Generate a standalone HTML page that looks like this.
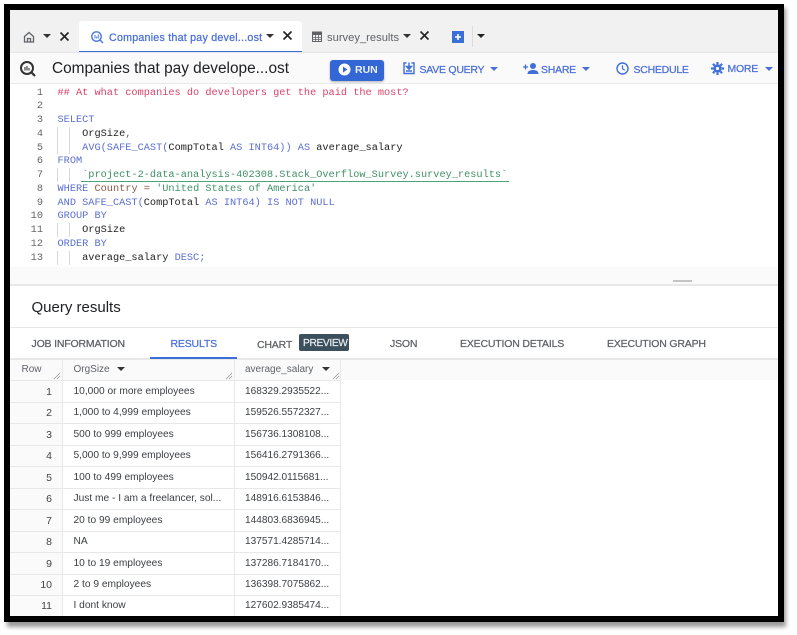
<!DOCTYPE html>
<html><head><meta charset="utf-8">
<style>
html,body{margin:0;padding:0;background:#fff}
body{width:797px;height:635px;position:relative;overflow:hidden;font-family:"Liberation Sans",sans-serif;filter:blur(.3px)}
.a{position:absolute}
.t{position:absolute;white-space:nowrap;line-height:14px;margin-top:1px}
.r{position:absolute;background:#e8e8e8}
.tri{position:absolute;width:0;height:0;border-left:4px solid transparent;border-right:4px solid transparent}
.code{position:absolute;left:57.5px;font:10.28px/14px "Liberation Mono",monospace;white-space:pre;color:#222;margin-top:1px}
.ln{position:absolute;width:36px;left:7px;text-align:right;font:10.28px/14px "Liberation Mono",monospace;color:#666;margin-top:1px}
.k{color:#5a6fd0}.c{color:#d9436a}.s{color:#3f9168}.f{color:#5a6fd0}.b{color:#8a5a44}
.guide{position:absolute;width:1px;background:#d8d8d8;margin-top:1px}
.rn{position:absolute;left:10px;width:42px;text-align:right;font-size:10.5px;line-height:14px;color:#444;margin-top:1px}
.o{position:absolute;left:73.5px;font-size:10.2px;line-height:14px;color:#3c4043;white-space:nowrap;margin-top:1px}
.v{position:absolute;left:245px;font-size:10.1px;line-height:14px;color:#3c4043;white-space:nowrap;margin-top:1px}
.tab{font-size:10.5px;color:#5f6368;-webkit-text-stroke:.25px #5f6368;letter-spacing:-.18px}
.btn{font-size:10.5px;color:#4a6fd8;-webkit-text-stroke:.25px #4a6fd8;letter-spacing:-.25px}
</style></head><body>
<!-- shadow + frame -->
<div class="a" style="left:7px;top:8px;width:779px;height:619px;background:#9a9a9a;filter:blur(2px)"></div>
<div class="a" style="left:4px;top:4px;width:780px;height:618px;background:#000"></div>
<div class="a" style="left:10px;top:10px;width:768px;height:606px;background:#fff;overflow:hidden"></div>

<!-- tab bar -->
<div class="a" style="left:10px;top:10px;width:768px;height:42px;background:#f1f1f1"></div>
<div class="a" style="left:79px;top:21px;width:223px;height:31px;background:#fff;border-radius:3px 3px 0 0"></div>
<div class="a" style="left:79px;top:51px;width:223px;height:1.5px;background:#3b6fd8"></div>
<div class="a" style="left:10px;top:52px;width:768px;height:1px;background:#e6e6e6"></div>

<!-- home icon -->
<svg class="a" style="left:23px;top:31px" width="12" height="12" viewBox="0 0 12 12"><path d="M1.500 5.500 6 1.500l4.500 4v5.500H1.500z M4.500 11V7.500h3V11" fill="none" stroke="#5f6368" stroke-width="1.300"/></svg>
<div class="tri" style="left:43px;top:34px;border-top:4px solid #333"></div>
<svg class="a" style="left:59px;top:31px" width="11" height="11" viewBox="0 0 11 11"><path d="M1.500 1.500l8 8M9.500 1.500l-8 8" stroke="#222" stroke-width="1.600"/></svg>

<!-- tab 1 -->
<svg class="a" style="left:90px;top:30px" width="14" height="14" viewBox="0 0 14 14"><circle cx="6.500" cy="6.500" r="4.700" fill="none" stroke="#4a78dc" stroke-width="1.400"/><path d="M10 10l3 3" stroke="#4a78dc" stroke-width="1.500"/><path d="M5 5v3.500M6.700 6.500v2M8.300 4.500v4" stroke="#4a78dc" stroke-width="1"/></svg>
<div class="t" style="left:109px;top:30px;font-size:10.7px;color:#4a6fd8;-webkit-text-stroke:.25px #4a6fd8;letter-spacing:.22px">Companies that pay devel...ost</div>
<div class="tri" style="left:266px;top:34px;border-top:4px solid #333"></div>
<svg class="a" style="left:282px;top:30px" width="11" height="11" viewBox="0 0 11 11"><path d="M1.500 1.500l8 8M9.500 1.500l-8 8" stroke="#222" stroke-width="1.600"/></svg>

<!-- tab 2 -->
<svg class="a" style="left:312px;top:31px" width="10" height="11" viewBox="0 0 10 11"><path d="M.5 1h9v9.500h-9z" fill="none" stroke="#5f6368" stroke-width="1"/><path d="M.5 1h9v3h-9z" fill="#5f6368"/><path d="M.5 6.500h9M.5 8.500h9M3.500 4v6.500M6.500 4v6.500" stroke="#5f6368" stroke-width=".8"/></svg>
<div class="t" style="left:327px;top:30px;font-size:11.2px;color:#5f6368">survey_results</div>
<div class="tri" style="left:403px;top:34px;border-top:4px solid #333"></div>
<svg class="a" style="left:419px;top:30px" width="11" height="11" viewBox="0 0 11 11"><path d="M1.500 1.500l8 8M9.500 1.500l-8 8" stroke="#222" stroke-width="1.600"/></svg>

<!-- plus -->
<div class="a" style="left:452px;top:31px;width:12px;height:12px;background:#3b6fd8"></div>
<svg class="a" style="left:452px;top:31px" width="12" height="12" viewBox="0 0 12 12"><path d="M6 3v6M3 6h6" stroke="#fff" stroke-width="1.600"/></svg>
<div class="a" style="left:472px;top:26px;width:1px;height:21px;background:#dcdcdc"></div>
<div class="tri" style="left:477px;top:34px;border-top:4px solid #222"></div>

<!-- toolbar -->
<div class="a" style="left:10px;top:53px;width:768px;height:30px;background:#fafafa"></div>
<div class="a" style="left:10px;top:83px;width:768px;height:1px;background:#e8e8e8"></div>
<svg class="a" style="left:19px;top:60px" width="18" height="18" viewBox="0 0 18 18"><circle cx="8" cy="8" r="6" fill="none" stroke="#333" stroke-width="2"/><path d="M12.500 12.500l3.500 3.500" stroke="#333" stroke-width="2.200"/><path d="M6 7v3.500M8 6v4.500M10 8v2.500" stroke="#333" stroke-width="1.100"/></svg>
<div class="t" style="left:52px;top:59px;font-size:15.4px;line-height:18px;color:#202124">Companies that pay develope...ost</div>

<div class="a" style="left:330px;top:59.500px;width:54px;height:21px;background:#3367d6;border-radius:3px;box-shadow:0 1px 2px rgba(0,0,0,.3)"></div>
<svg class="a" style="left:338px;top:63px" width="13" height="13" viewBox="0 0 13 13"><circle cx="6.500" cy="6.500" r="6" fill="#fff"/><path d="M5 3.500v6l4.500-3z" fill="#3367d6"/></svg>
<div class="t" style="left:355px;top:62px;font-size:10.5px;font-weight:bold;color:#e8eefc">RUN</div>

<svg class="a" style="left:403px;top:62px" width="12" height="13" viewBox="0 0 12 13"><path d="M3.500 1H1v10.500h10V1H8.500" fill="none" stroke="#3f6fd8" stroke-width="1.400"/><path d="M6 .5v6M3.500 4.500 6 7.200l2.500-2.700zM3 9h6" stroke="#3f6fd8" stroke-width="1.400" fill="#3f6fd8"/></svg>
<div class="t btn" style="left:419.500px;top:62px">SAVE QUERY</div>
<div class="tri" style="left:490px;top:66.500px;border-top:4px solid #4a6fd8"></div>

<svg class="a" style="left:523px;top:62px" width="16" height="13" viewBox="0 0 16 13"><circle cx="10" cy="4" r="3" fill="#3f6fd8"/><path d="M4.500 12c0-3 2.500-4 5.500-4s5.500 1 5.500 4z" fill="#3f6fd8"/><path d="M0 5h5M2.500 2.500v5" stroke="#3f6fd8" stroke-width="1.300"/></svg>
<div class="t btn" style="left:541px;top:62px">SHARE</div>
<div class="tri" style="left:582px;top:66.500px;border-top:4px solid #4a6fd8"></div>

<svg class="a" style="left:616px;top:62px" width="13" height="13" viewBox="0 0 13 13"><circle cx="6.500" cy="6.500" r="5.500" fill="none" stroke="#3f6fd8" stroke-width="1.400"/><path d="M6.500 3.200v3.500l2.300 1.500" fill="none" stroke="#3f6fd8" stroke-width="1.200"/></svg>
<div class="t btn" style="left:633.500px;top:62px">SCHEDULE</div>

<svg class="a" style="left:711px;top:62px" width="13" height="13" viewBox="0 0 13 13"><circle cx="6.500" cy="6.500" r="2.900" fill="none" stroke="#3f6fd8" stroke-width="2.600"/><path d="M6.500 0v13M0 6.500h13M1.900 1.900l9.200 9.200M11.100 1.900l-9.200 9.200" stroke="#3f6fd8" stroke-width="2.200" stroke-dasharray="2.300 8.400"/></svg>
<div class="t btn" style="left:727.500px;top:61px">MORE</div>
<div class="tri" style="left:765px;top:66.500px;border-top:4px solid #4a6fd8"></div>

<!-- editor -->
<div class="ln" style="top:85px">1</div>
<div class="ln" style="top:98px">2</div>
<div class="ln" style="top:112px">3</div>
<div class="ln" style="top:126px">4</div>
<div class="ln" style="top:140px">5</div>
<div class="ln" style="top:153px">6</div>
<div class="ln" style="top:167px">7</div>
<div class="ln" style="top:181px">8</div>
<div class="ln" style="top:195px">9</div>
<div class="ln" style="top:208px">10</div>
<div class="ln" style="top:222px">11</div>
<div class="ln" style="top:236px">12</div>
<div class="ln" style="top:250px">13</div>
<div class="guide" style="left:57px;top:126px;height:27px"></div>
<div class="guide" style="left:69px;top:126px;height:27px"></div>
<div class="guide" style="left:57px;top:167px;height:14px"></div>
<div class="guide" style="left:69px;top:167px;height:14px"></div>
<div class="guide" style="left:57px;top:222px;height:14px"></div>
<div class="guide" style="left:69px;top:222px;height:14px"></div>
<div class="guide" style="left:57px;top:250px;height:14px"></div>
<div class="guide" style="left:69px;top:250px;height:14px"></div>
<div class="code c" style="top:85px">## At what companies do developers get the paid the most?</div>
<div class="code k" style="top:112px">SELECT</div>
<div class="code" style="top:126px">    OrgSize<span style="color:#666">,</span></div>
<div class="code" style="top:140px">    <span class="k">AVG(SAFE_CAST(</span>CompTotal <span class="k">AS INT64)) AS</span> average_salary</div>
<div class="code k" style="top:153px">FROM</div>
<div class="code s" style="top:167px">    `project-2-data-analysis-402308.Stack_Overflow_Survey.survey_results`</div>
<div class="a" style="left:81px;top:181px;width:428px;height:1px;background:#4aa37a"></div>
<div class="code" style="top:181px"><span class="k">WHERE</span> <span class="b">Country =</span> <span class="s">'United States of America'</span></div>
<div class="code" style="top:195px"><span class="k">AND SAFE_CAST(</span>CompTotal <span class="k">AS INT64) IS NOT NULL</span></div>
<div class="code k" style="top:208px">GROUP BY</div>
<div class="code" style="top:222px">    OrgSize</div>
<div class="code k" style="top:236px">ORDER BY</div>
<div class="code" style="top:250px">    average_salary <span class="k">DESC;</span></div>

<!-- divider -->
<div class="a" style="left:10px;top:267px;width:768px;height:17px;background:#fafafa"></div>
<div class="a" style="left:10px;top:284px;width:768px;height:1.500px;background:#e8e8e8"></div>
<div class="a" style="left:673px;top:280px;width:19px;height:2px;background:#c4c4c4"></div>

<!-- results -->
<div class="t" style="left:31.500px;top:298px;font-size:15px;line-height:18px;color:#202124">Query results</div>
<div class="a" style="left:10px;top:327px;width:768px;height:1px;background:#e8e8e8"></div>
<div class="a" style="left:10px;top:358px;width:768px;height:1.500px;background:#e8e8e8"></div>
<div class="t tab" style="left:31.500px;top:336px">JOB INFORMATION</div>
<div class="t tab" style="left:170.500px;top:336px;color:#4a6fd8;-webkit-text-stroke:.25px #4a6fd8">RESULTS</div>
<div class="a" style="left:150px;top:357px;width:87px;height:1.500px;background:#3b6fd8"></div>
<div class="t tab" style="left:257px;top:337px">CHART</div>
<div class="a" style="left:299px;top:334px;width:50px;height:17px;background:#3c4f5c;border-radius:2px"></div>
<div class="t" style="left:303px;top:335.500px;font-size:10.2px;letter-spacing:-.35px;-webkit-text-stroke:.2px #e8edf0;color:#e8edf0">PREVIEW</div>
<div class="t tab" style="left:390px;top:336px">JSON</div>
<div class="t tab" style="left:460px;top:336px">EXECUTION DETAILS</div>
<div class="t tab" style="left:607px;top:336px">EXECUTION GRAPH</div>

<!-- table header -->
<div class="a" style="left:10px;top:359.500px;width:768px;height:20.500px;background:#fafafa"></div>
<div class="a" style="left:10px;top:380px;width:768px;height:1px;background:#e8e8e8"></div>
<div class="a" style="left:341px;top:380px;width:437px;height:236px;background:#fff"></div>
<div class="a" style="left:10px;top:381px;width:52px;height:235px;background:#fafafa"></div>
<div class="t" style="left:21.500px;top:362px;font-size:10px;color:#5f6368">Row</div>
<div class="t" style="left:73.500px;top:362px;font-size:10px;color:#5f6368">OrgSize</div>
<div class="tri" style="left:117px;top:367px;border-top:4px solid #333"></div>
<div class="t" style="left:245px;top:362px;font-size:10px;color:#5f6368">average_salary</div>
<div class="tri" style="left:322px;top:367px;border-top:4px solid #333"></div>
<svg class="a" style="left:53px;top:372px" width="8" height="8" viewBox="0 0 8 8"><path d="M1 7l6-6M4 7l3-3" stroke="#999" stroke-width=".8"/></svg>
<svg class="a" style="left:225px;top:372px" width="8" height="8" viewBox="0 0 8 8"><path d="M1 7l6-6M4 7l3-3" stroke="#999" stroke-width=".8"/></svg>
<svg class="a" style="left:332px;top:372px" width="8" height="8" viewBox="0 0 8 8"><path d="M1 7l6-6M4 7l3-3" stroke="#999" stroke-width=".8"/></svg>

<!-- table lines -->
<div class="r" style="left:62px;top:359px;width:1px;height:257px"></div>
<div class="r" style="left:234px;top:359px;width:1px;height:257px"></div>
<div class="r" style="left:340px;top:359px;width:1px;height:257px"></div>
<div class="r" style="left:10px;top:401.500px;width:331px;height:1px"></div>
<div class="r" style="left:10px;top:423px;width:331px;height:1px"></div>
<div class="r" style="left:10px;top:444.500px;width:331px;height:1px"></div>
<div class="r" style="left:10px;top:466px;width:331px;height:1px"></div>
<div class="r" style="left:10px;top:487.500px;width:331px;height:1px"></div>
<div class="r" style="left:10px;top:509px;width:331px;height:1px"></div>
<div class="r" style="left:10px;top:530.500px;width:331px;height:1px"></div>
<div class="r" style="left:10px;top:552px;width:331px;height:1px"></div>
<div class="r" style="left:10px;top:573.500px;width:331px;height:1px"></div>
<div class="r" style="left:10px;top:595px;width:331px;height:1px"></div>

<!-- rows -->
<div class="rn" style="top:384px">1</div><div class="o" style="top:384px">10,000 or more employees</div><div class="v" style="top:384px">168329.2935522...</div>
<div class="rn" style="top:405px">2</div><div class="o" style="top:405px">1,000 to 4,999 employees</div><div class="v" style="top:405px">159526.5572327...</div>
<div class="rn" style="top:427px">3</div><div class="o" style="top:427px">500 to 999 employees</div><div class="v" style="top:427px">156736.1308108...</div>
<div class="rn" style="top:448px">4</div><div class="o" style="top:448px">5,000 to 9,999 employees</div><div class="v" style="top:448px">156416.2791366...</div>
<div class="rn" style="top:470px">5</div><div class="o" style="top:470px">100 to 499 employees</div><div class="v" style="top:470px">150942.0115681...</div>
<div class="rn" style="top:491px">6</div><div class="o" style="top:491px">Just me - I am a freelancer, sol...</div><div class="v" style="top:491px">148916.6153846...</div>
<div class="rn" style="top:513px">7</div><div class="o" style="top:513px">20 to 99 employees</div><div class="v" style="top:513px">144803.6836945...</div>
<div class="rn" style="top:534px">8</div><div class="o" style="top:534px">NA</div><div class="v" style="top:534px">137571.4285714...</div>
<div class="rn" style="top:556px">9</div><div class="o" style="top:556px">10 to 19 employees</div><div class="v" style="top:556px">137286.7184170...</div>
<div class="rn" style="top:577px">10</div><div class="o" style="top:577px">2 to 9 employees</div><div class="v" style="top:577px">136398.7075862...</div>
<div class="rn" style="top:598px">11</div><div class="o" style="top:598px">I dont know</div><div class="v" style="top:598px">127602.9385474...</div>
</body></html>
